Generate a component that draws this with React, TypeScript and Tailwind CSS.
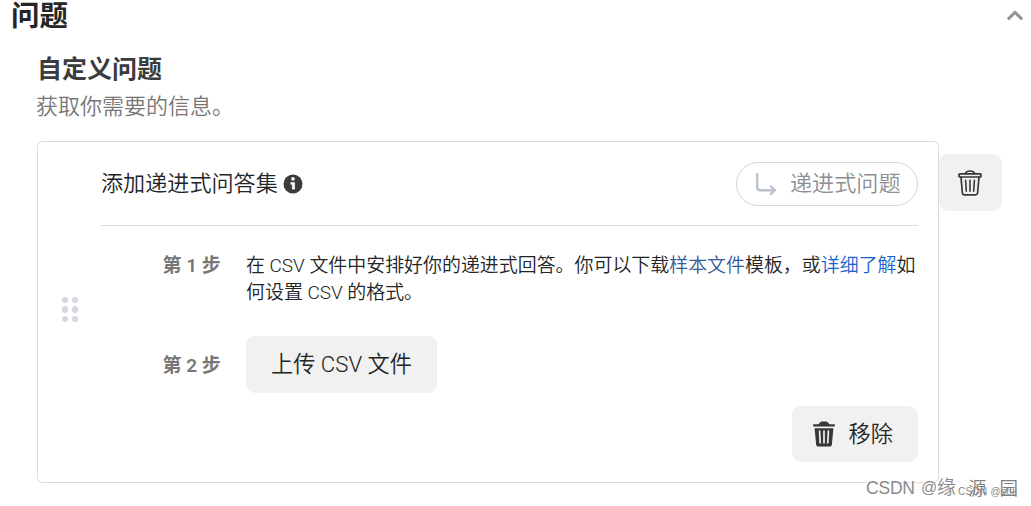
const FONT = "font-[Roboto,'Noto_Sans_CJK_SC',sans-serif]";

function ChevronUp() {
  return (
    <svg className="block h-[12px] w-[18px]" viewBox="0 0 18 12" fill="none">
      <path d="M2.8 9.4 9 3.4l6.2 6" stroke="#90949c" strokeWidth="3" strokeLinecap="round" strokeLinejoin="round" />
    </svg>
  );
}

function InfoIcon() {
  return (
    <svg className="block h-[20px] w-[20px]" viewBox="0 0 20 20">
      <circle cx="10" cy="10" r="9.5" fill="#3b3b3c" />
      <circle cx="10" cy="4.9" r="1.8" fill="#fff" />
      <path d="M7.8 8.5h3.8v6.7H9.3v-4.9H7.8z" fill="#fff" stroke="#fff" strokeWidth=".6" strokeLinejoin="round" />
    </svg>
  );
}

function BranchArrow() {
  return (
    <svg className="block h-[24px] w-[24px]" viewBox="0 0 24 24" fill="none" stroke="#bcc2cb" strokeWidth="2.4" strokeLinecap="round" strokeLinejoin="round">
      <path d="M3.2 2v13.2c0 2 1 3 3 3h14.4" />
      <path d="m17 14.5 3.8 3.7-3.8 3.6" />
    </svg>
  );
}

function TrashOutline() {
  return (
    <svg className="block h-[26px] w-[24px]" viewBox="0 0 24 26" fill="none" stroke="#37383a" strokeLinecap="round" strokeLinejoin="round">
      <path d="M7.2 3.6C8.2 1.2 9.4 1 12 1s3.8.2 4.8 2.6" strokeWidth="1.6" />
      <rect x="1" y="3.8" width="22" height="3.2" rx=".8" strokeWidth="1.7" />
      <path d="m3 7.2 1.4 15.6c.1 1.3.8 2 2.1 2h11c1.3 0 2-.7 2.1-2L21 7.2" strokeWidth="1.7" />
      <path d="m7.6 10.3.7 11M12 10.3v11M16.4 10.3l-.7 11" strokeWidth="1.6" />
    </svg>
  );
}

function TrashSolid() {
  return (
    <svg className="block h-[26px] w-[22px]" viewBox="0 0 22 26">
      <path d="M5.7 3.2C7.2 1 7.5.5 11 .5s3.8.5 5.3 2.7H21c.6 0 1 .4 1 1.1s-.4 1.2-1 1.2H1c-.6 0-1-.5-1-1.2s.4-1.1 1-1.1z" fill="#37383a" />
      <path d="M1.6 7.2h18.8l-1.5 16c-.1 1.500-.9 2.300-2.400 2.300h-11c-1.500 0-2.300-.8-2.400-2.300z" fill="#37383a" />
      <path d="m6.6 10.2.6 11.6M11 10.2v11.6M15.4 10.2l-.6 11.6" stroke="#f1f1f1" strokeWidth="1.7" strokeLinecap="round" />
    </svg>
  );
}

function DragHandle() {
  return (
    <div className="grid grid-cols-2 gap-x-[3.5px] gap-y-[3.2px]">
      {[0, 1, 2, 3, 4, 5].map((dot) => (
        <span key={dot} className="h-[6.4px] w-[6.4px] rounded-full bg-[#d5d8de]" />
      ))}
    </div>
  );
}

function StepLabel({ number }: { number: number }) {
  return <div className="w-[84px] shrink-0 pl-[0.5px] text-[19px] leading-[27px] font-semibold text-[#777]">第 {number} 步</div>;
}

function Csv() {
  return <span className="font-light">CSV</span>;
}

export default function App() {
  return (
    <main className={`relative h-[506px] w-[1031px] overflow-hidden bg-white font-[350] whitespace-nowrap text-[#222426] ${FONT}`}>
      <header className="flex h-[34px] items-start justify-between pr-[7px] pl-[11px]">
        <h1 className="pt-px text-[28.5px] leading-[32px] font-bold text-[#252627]">问题</h1>
        <div className="pt-[9px]"><ChevronUp /></div>
      </header>

      <section className="pl-[37px]">
        <h2 className="h-[53px] pt-[18px] text-[25px] leading-[36px] font-bold text-[#3b3c3d]">自定义问题</h2>
        <p className="-ml-px h-[54px] pt-[4px] text-[22px] leading-[32px] text-[#777]">获取你需要的信息。</p>

        <div className="flex items-start">
          <div className="flex h-[342px] w-[902px] rounded-[6px] border border-[#dadbdd]">
            <div className="flex w-[63px] shrink-0 items-center pb-[5px] pl-[24px]"><DragHandle /></div>
            <div className="w-[817px]">
              <div className="flex h-[84px] items-center justify-between border-b border-[#dadbdd]">
                <div className="flex items-center gap-[5px] text-[22.1px] leading-[32px]">
                  <span className="-mt-px">添加递进式问答集</span>
                  <InfoIcon />
                </div>
                <div className="flex h-[44px] w-[182px] items-center rounded-full border border-[#d4d7dc] pl-[17px] text-[22.1px] leading-[32px] text-[#8d8f92]">
                  <BranchArrow />
                  <span className="-mt-px pl-[12px]">递进式问题</span>
                </div>
              </div>

              <div className="flex pt-[26px] pl-[61px]">
                <StepLabel number={1} />
                <p className="text-[18.94px] leading-[27px]">
                  在 <Csv /> 文件中安排好你的递进式回答。你可以下载<a className="text-[#385898]">样本文件</a>模板，或<a className="text-[#1763cf]">详细了解</a>如
                  <br />
                  何设置 <Csv /> 的格式。
                </p>
              </div>

              <div className="flex items-center pt-[30px] pl-[61px]">
                <div className="pt-px"><StepLabel number={2} /></div>
                <button className="h-[57px] w-[191px] rounded-[9px] bg-[#f1f1f1] text-[22.2px]">上传 <Csv /> 文件</button>
              </div>

              <div className="flex justify-end pt-[13px]">
                <button className="flex h-[56px] w-[126px] items-center gap-[14px] rounded-[9px] bg-[#f1f1f1] pl-[20.5px] text-[22.2px]">
                  <TrashSolid />
                  <span className="pt-px">移除</span>
                </button>
              </div>
            </div>
          </div>
          <button className="mt-[13px] flex h-[57px] w-[63px] items-center justify-center rounded-[9px] bg-[#f1f1f1] pr-px"><TrashOutline /></button>
        </div>
      </section>

      <div className="absolute top-[476px] left-[866px] flex font-['Liberation_Sans','Noto_Sans_CJK_SC',sans-serif] text-[17.5px] leading-[24px] text-[#8a8a8a] [text-shadow:-1px_-1px_0_#fff]">
        <span className="w-[55px] tracking-[-0.2px]">CSDN</span>
        <span className="w-[16px] text-[16px]">@</span>
        <span className="text-[19px]">缘</span>
      </div>
      <div className="absolute top-[475px] left-[968px] flex gap-[13px] font-['Noto_Sans_CJK_SC',sans-serif] text-[18.5px] leading-[24px] text-[#808080]">
        <span>源</span>
        <span>园</span>
      </div>
      <div className="absolute top-[486px] left-[958px] font-['Liberation_Sans',sans-serif] text-[10px] leading-[12px] tracking-[0.3px] text-[#888]">CSDN @still</div>
    </main>
  );
}
